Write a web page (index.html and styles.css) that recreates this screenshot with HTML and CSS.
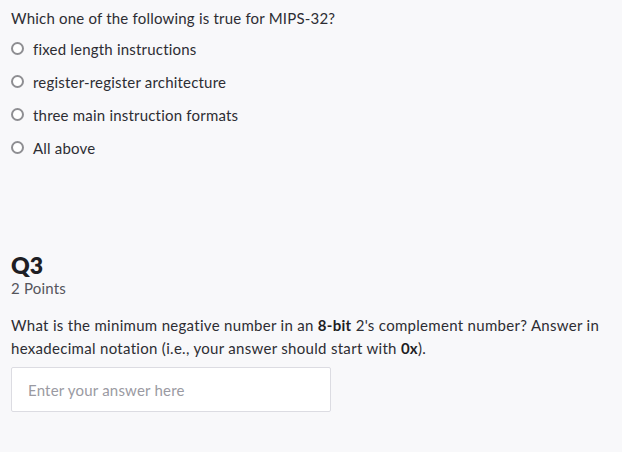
FILE: index.html
```html
<!DOCTYPE html>
<html>
<head>
<meta charset="utf-8">
<link rel="stylesheet" href="styles.css">
</head>
<body>
<div class="page">
  <div class="question">
    <p class="prompt">Which one of the following is true for MIPS-32?</p>
    <ul class="options">
      <li class="option"><span class="radio"></span><span>fixed length instructions</span></li>
      <li class="option"><span class="radio"></span><span>register-register architecture</span></li>
      <li class="option"><span class="radio"></span><span>three main instruction formats</span></li>
      <li class="option"><span class="radio"></span><span>All above</span></li>
    </ul>
  </div>
  <div class="question q3">
    <h2 class="qtitle">Q3</h2>
    <div class="points">2 Points</div>
    <p class="text">What is the minimum negative number in an <b>8-bit</b> 2's complement number? Answer in hexadecimal notation (i.e., your answer should start with <b>0x</b>).</p>
    <input class="answer" type="text" placeholder="Enter your answer here">
  </div>
</div>
</body>
</html>
```
FILE: styles.css
```css
html, body {
  margin: 0;
  padding: 0;
  background: #f8f8fa;
}
body {
  font-family: Lato, "Liberation Sans", sans-serif;
  font-size: 15px;
  letter-spacing: 0.2px;
  color: #2d2d33;
}
.page {
  padding: 7px 11px 0 11px;
}
.prompt {
  margin: 0;
  line-height: 22px;
}
.options {
  list-style: none;
  margin: 3px 0 0 0;
  padding: 0;
}
.option {
  display: flex;
  align-items: center;
  height: 33px;
}
.radio {
  flex: none;
  width: 9px;
  height: 9px;
  border: 2px solid #8e8e92;
  border-radius: 50%;
  margin-right: 9px;
  background: #fff;
}
.q3 {
  margin-top: 88px;
}
.qtitle {
  margin: 0;
  font-size: 23px;
  font-weight: 800;
  letter-spacing: 0;
  color: #1e1e24;
  line-height: 26px;
}
.points {
  color: #55555c;
  line-height: 20px;
}
.text {
  margin: 16px 0 0 0;
  line-height: 23px;
  letter-spacing: 0.3px;
}
.text b {
  font-weight: 700;
  color: #1e1e24;
}
.answer {
  display: block;
  margin-top: 7px;
  width: 320px;
  height: 45px;
  box-sizing: border-box;
  border: 1px solid #dcdce2;
  border-radius: 2px;
  background: #fff;
  padding: 0 16px;
  font-family: Lato, "Liberation Sans", sans-serif;
  font-size: 15px;
  letter-spacing: 0.2px;
  outline: none;
}
.answer::placeholder {
  color: #9a9aa2;
}
```
